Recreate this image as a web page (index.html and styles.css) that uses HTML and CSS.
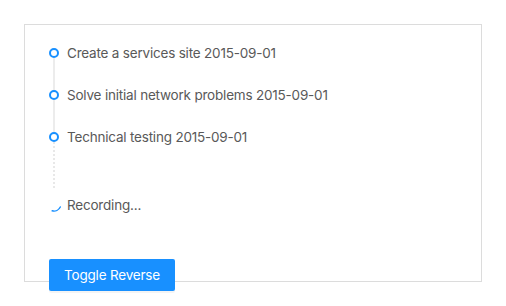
FILE: index.html
```html
<!DOCTYPE html>
<html lang="en">
<head>
  <meta charset="UTF-8">
  <title>Timeline</title>
  <link rel="stylesheet" href="styles.css">
</head>
<body>
  <div class="page">
    <div class="box">
      <ul class="timeline">
        <li class="item">
          <span class="tail"></span>
          <span class="head"></span>
          <div class="content">Create a services site 2015-09-01</div>
        </li>
        <li class="item">
          <span class="tail"></span>
          <span class="head"></span>
          <div class="content">Solve initial network problems 2015-09-01</div>
        </li>
        <li class="item last">
          <span class="tail dotted"></span>
          <span class="head"></span>
          <div class="content">Technical testing 2015-09-01</div>
        </li>
        <li class="item pending">
          <span class="spin">
            <svg width="16" height="16" viewBox="0 0 16 16">
              <path d="M14.3 11 A7 7 0 0 1 6.2 14.8" fill="none" stroke="#1890ff" stroke-width="1.4" stroke-linecap="round"/>
            </svg>
          </span>
          <div class="content">Recording...</div>
        </li>
      </ul>
      <button class="btn">Toggle Reverse</button>
    </div>
  </div>
</body>
</html>
```

FILE: styles.css
```css
* {
  margin: 0;
  padding: 0;
  box-sizing: border-box;
}
body {
  font-family: "Inter", "Liberation Sans", sans-serif;
  background: #fff;
}
.page {
  padding: 24px;
}
.box {
  width: 458px;
  height: 258px;
  border: 1px solid #dcdcdc;
  padding: 17px 23px 0;
}
.timeline {
  list-style: none;
}
.item {
  position: relative;
  padding-bottom: 20px;
  font-size: 13.5px;
  letter-spacing: -0.2px;
  line-height: 22px;
  color: #595959;
}
.item.last .content {
  min-height: 48px;
}
.item.pending {
  padding-bottom: 0;
}
.tail {
  position: absolute;
  left: 5px;
  top: 16px;
  bottom: -6px;
  border-left: 2px solid #ececec;
}
.tail.dotted {
  border-left: 2px dotted #e8e8e8;
  bottom: 6px;
}
.head {
  position: absolute;
  left: 1px;
  top: 6px;
  width: 10px;
  height: 10px;
  border: 2px solid #1890ff;
  border-radius: 50%;
  background: #fff;
}
.spin {
  position: absolute;
  left: -2px;
  top: 2px;
  width: 16px;
  height: 16px;
}
.spin svg {
  display: block;
}
.content {
  margin-left: 19px;
}
.btn {
  margin-top: 43px;
  margin-left: 1px;
  width: 126px;
  height: 32px;
  border: none;
  border-radius: 2px;
  background: #1890ff;
  color: #fff;
  font-family: "Inter", "Liberation Sans", sans-serif;
  font-size: 13.5px;
  letter-spacing: -0.2px;
  box-shadow: 0 2px 0 rgba(0, 0, 0, 0.045);
}
```
